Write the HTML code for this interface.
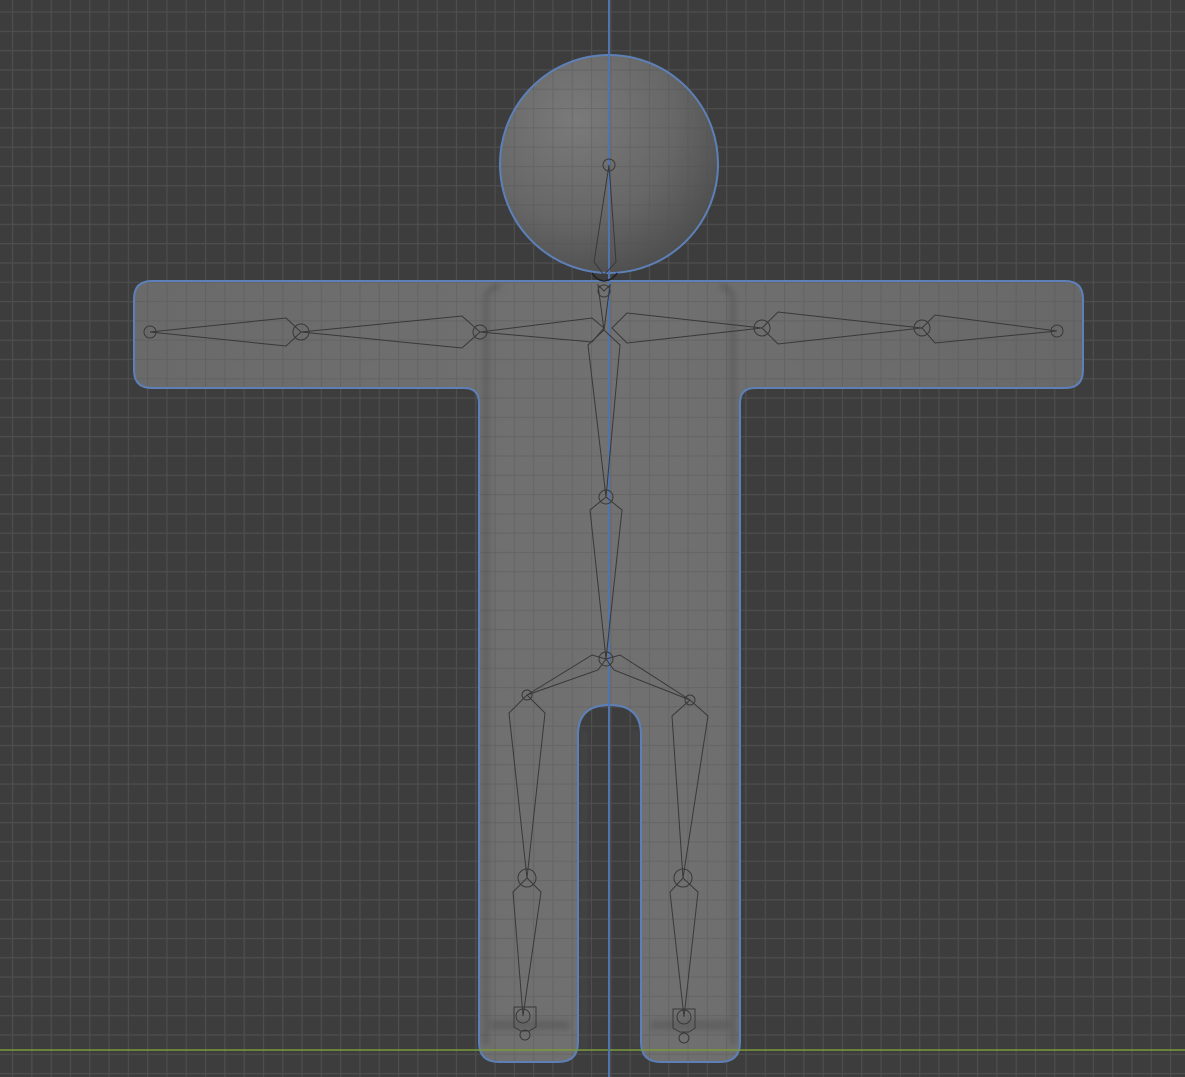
<!DOCTYPE html>
<html><head><meta charset="utf-8"><style>
html,body{margin:0;padding:0;background:#3d3d3d;width:1185px;height:1077px;overflow:hidden}
svg{display:block}
</style></head><body>
<svg width="1185" height="1077" viewBox="0 0 1185 1077" xmlns="http://www.w3.org/2000/svg">
<defs>
<pattern id="g" x="12" y="11.5" width="19.3" height="19.3" patternUnits="userSpaceOnUse">
<path d="M0.5 0V19.3M0 0.5H19.3" stroke="#4e4e4e" stroke-width="1.2" fill="none"/>
</pattern>
<radialGradient id="hg" cx="0.35" cy="0.3" r="0.75">
<stop offset="0" stop-color="#7a7a7a"/><stop offset="0.6" stop-color="#676767"/><stop offset="1" stop-color="#4e4e4e"/>
</radialGradient>
<linearGradient id="bg" x1="0" y1="0" x2="1" y2="0">
<stop offset="0" stop-color="#6a6a6a"/><stop offset="0.5" stop-color="#717171"/><stop offset="1" stop-color="#686868"/>
</linearGradient>
<filter id="bl"><feGaussianBlur stdDeviation="3"/></filter>
</defs>
<rect width="1185" height="1077" fill="#3d3d3d"/>
<rect width="1185" height="1077" fill="url(#g)"/>
<path d="M152,281 H1065 Q1083,281 1083,299 V370 Q1083,388 1065,388 H755 Q740,388 740,403 V1042 Q740,1062 720,1062 H661 Q641,1062 641,1042 V735 Q641,705 609.5,705 Q578,705 578,735 V1042 Q578,1062 558,1062 H499 Q479,1062 479,1042 V403 Q479,388 464,388 H152 Q134,388 134,370 V299 Q134,281 152,281 Z" fill="url(#bg)"/>
<circle cx="609" cy="164" r="109" fill="url(#hg)"/>
<rect width="1185" height="1077" fill="url(#g)" opacity="0.3"/>
<g filter="url(#bl)" opacity="0.55">
<path d="M486,300 Q486,288 500,286 M486,300 V1045 M733,300 Q733,288 720,286 M733,300 V1045 M584,730 V1050 M636,730 V1050" stroke="#505050" stroke-width="5" fill="none"/>
<path d="M490,1025 H570 M650,1025 H730" stroke="#555" stroke-width="10" fill="none"/>
</g>
<path d="M152,281 H1065 Q1083,281 1083,299 V370 Q1083,388 1065,388 H755 Q740,388 740,403 V1042 Q740,1062 720,1062 H661 Q641,1062 641,1042 V735 Q641,705 609.5,705 Q578,705 578,735 V1042 Q578,1062 558,1062 H499 Q479,1062 479,1042 V403 Q479,388 464,388 H152 Q134,388 134,370 V299 Q134,281 152,281 Z" fill="none" stroke="#5d80b8" stroke-width="2"/>
<circle cx="609" cy="164" r="109" fill="none" stroke="#5d80b8" stroke-width="2"/>
<line x1="0" y1="1050" x2="1185" y2="1050" stroke="#7a9a3a" stroke-width="1.5"/>
<line x1="609" y1="0" x2="609" y2="1077" stroke="#4f74b0" stroke-width="2"/>
<g fill="none" stroke="#383838" stroke-width="1">
<polygon points="480,332 462,316 301,332 462,348"/>
<polygon points="301,332 286,318 150,332 286,346"/>
<polygon points="604,328 592,318 480,332 592,342"/>
<polygon points="612,328 627,313 762,328 627,343"/>
<polygon points="762,328 778,312 922,328 778,344"/>
<polygon points="922,328 935,315 1057,331 935,343"/>
<polygon points="604,330 588,345 606,497 620,345"/>
<polygon points="606,497 590,510 606,659 622,510"/>
<polygon points="604,275 594,262 609,165 616,262"/>
<polygon points="606,659 592,655 527,695 598,670"/>
<polygon points="606,659 620,655 690,700 614,670"/>
<polygon points="527,695 509,713 527,878 545,713"/>
<polygon points="527,878 513,892 523,1016 541,892"/>
<polygon points="690,700 672,716 683,878 708,716"/>
<polygon points="683,878 670,892 684,1017 698,892"/>
<polygon points="604,291 598,285 604,330 610,285"/>
<circle cx="150" cy="332" r="6"/><circle cx="301" cy="332" r="8"/><circle cx="480" cy="332" r="7"/>
<circle cx="762" cy="328" r="8"/><circle cx="922" cy="328" r="8"/><circle cx="1057" cy="331" r="6"/>
<circle cx="604" cy="291" r="6"/><circle cx="606" cy="497" r="7"/><circle cx="606" cy="659" r="7"/>
<circle cx="609" cy="165" r="6"/><circle cx="527" cy="695" r="5"/><circle cx="690" cy="700" r="5"/>
<circle cx="527" cy="878" r="9"/><circle cx="683" cy="878" r="9"/>
<circle cx="523" cy="1016" r="7"/><circle cx="684" cy="1017" r="7"/>
<circle cx="525" cy="1035" r="5"/><circle cx="684" cy="1038" r="5"/>
<path d="M514,1007 H536 V1027 L529,1031 H521 L514,1027 Z M673,1009 H695 V1028 L689,1032 H680 L673,1028 Z"/>
</g>
<path d="M592,273 Q596,280 604,281 Q613,280 617,273" fill="none" stroke="#222" stroke-width="1.5"/>
</svg>
</body></html>
